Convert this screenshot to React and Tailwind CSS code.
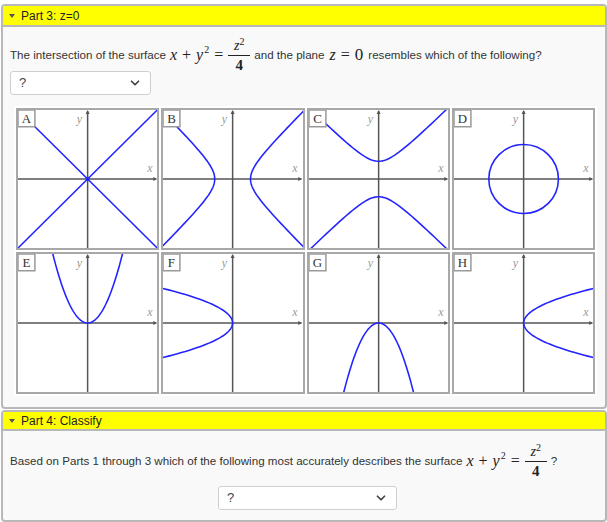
import { ChevronDown } from 'lucide-react'

const BLUE = '#2424ff'
const SERIF = { fontFamily: "'Liberation Serif', 'DejaVu Serif', serif" }

function curve(fn, from, to, steps = 60) {
  const pts = []
  for (let i = 0; i <= steps; i++) {
    const t = from + ((to - from) * i) / steps
    const [x, y] = fn(t)
    pts.push(`${i === 0 ? 'M' : 'L'}${x.toFixed(2)} ${y.toFixed(2)}`)
  }
  return pts.join(' ')
}

const C = 70
const A = 18
const K = 17.5

const PLOTS = {
  A: [`M0 140 L140 0`, `M16 16 L140 140`],
  B: [
    curve((t) => [C - A * Math.cosh(t), C - A * Math.sinh(t)], -2.06, 2.06),
    curve((t) => [C + A * Math.cosh(t), C - A * Math.sinh(t)], -2.06, 2.06),
  ],
  C: [
    curve((t) => [C + A * Math.sinh(t), C - A * Math.cosh(t)], -2.06, 2.06),
    curve((t) => [C + A * Math.sinh(t), C + A * Math.cosh(t)], -2.06, 2.06),
  ],
  D: [],
  E: [curve((t) => [C + t, C - (t * t) / K], -36, 36)],
  F: [curve((t) => [C - (t * t) / K, C + t], -36, 36)],
  G: [curve((t) => [C + t, C + (t * t) / K], -36, 36)],
  H: [curve((t) => [C + (t * t) / K, C + t], -36, 36)],
}

function Plot({ id }) {
  return (
    <div className="h-[142px] border-2 border-[#a8a8a8] bg-white">
      <svg viewBox="0 0 140 140" className="w-full h-full block" preserveAspectRatio="none">
        <line x1="70" y1="140" x2="70" y2="1" stroke="#555" strokeWidth="1.5" />
        <line x1="0" y1="70" x2="139" y2="70" stroke="#555" strokeWidth="1.5" />
        <path d="M70 0 L68 4 L72 4 Z" fill="#555" />
        <path d="M140 70 L136 68 L136 72 Z" fill="#555" />
        <text x="59" y="13" fontSize="12" fontStyle="italic" fill="#999" fontFamily="'Liberation Serif', serif">
          y
        </text>
        <text x="130" y="63" fontSize="12" fontStyle="italic" fill="#999" fontFamily="'Liberation Serif', serif">
          x
        </text>
        {PLOTS[id].map((d, i) => (
          <path key={i} d={d} fill="none" stroke={BLUE} strokeWidth="1.6" />
        ))}
        {id === 'D' && <circle cx="70" cy="70" r="35" fill="none" stroke={BLUE} strokeWidth="1.6" />}
        {id === 'A' && <circle cx="70" cy="70" r="2" fill={BLUE} />}
        <rect x="0" y="0" width="17" height="17" fill="white" stroke="#999" strokeWidth="1.5" />
        <text x="8.5" y="13.5" fontSize="13" textAnchor="middle" fill="#333" fontFamily="'Liberation Serif', serif">
          {id}
        </text>
      </svg>
    </div>
  )
}

function Surface() {
  return (
    <span className="inline-flex items-center mx-[4px] text-[16px] text-[#222]" style={SERIF}>
      <span className="italic">x</span>
      <span className="mx-[5px]">+</span>
      <span className="italic">y</span>
      <sup className="text-[10px] ml-[1px]">2</sup>
      <span className="mx-[5px]">=</span>
      <span className="inline-flex flex-col items-center leading-none">
        <span className="px-[2px] pb-[2px]">
          <span className="italic text-[14px]">z</span>
          <sup className="text-[10px]">2</sup>
        </span>
        <span className="w-[22px] border-t border-[#222]" />
        <span className="pt-[2px] text-[15px] font-bold">4</span>
      </span>
    </span>
  )
}

function Select({ className = '' }) {
  return (
    <div className={`h-[24px] bg-white border border-[#cfcfcf] rounded-[3px] flex items-center justify-between pl-[8px] pr-[8px] ${className}`}>
      <span className="text-[13px] text-[#444]">?</span>
      <ChevronDown size={14} strokeWidth={3} className="text-[#444]" />
    </div>
  )
}

function Header({ title, h }) {
  return (
    <div className={`${h} bg-[#ffff00] border-b-2 border-[#b8b8b8] flex items-center pl-[6px] gap-[6px]`}>
      <svg width="6" height="4" viewBox="0 0 6 4">
        <path d="M0 0 L6 0 L3 4 Z" fill="#555" />
      </svg>
      <span className="text-[12px] text-[#222]">{title}</span>
    </div>
  )
}

export default function App() {
  return (
    <div
      className="w-[607px] h-[522px] bg-white overflow-hidden pt-[4px] text-[#333]"
      style={{ fontFamily: "'Liberation Sans', Arial, sans-serif" }}
    >
      <section className="ml-[1px] w-[606px] border-2 border-[#b8b8b8] rounded-[4px] bg-[#f9f9f9] overflow-hidden">
        <Header title="Part 3: z=0" h="h-[21px]" />
        <div className="pt-[12px] pb-[11px] pl-[7px]">
          <div className="h-[31px] flex items-center text-[11.6px]">
            <span>The intersection of the surface</span>
            <Surface />
            <span>and the plane</span>
            <span className="mx-[5px] text-[16px] text-[#222]" style={SERIF}>
              <span className="italic">z</span>
              <span className="mx-[5px]">=</span>
              <span className="text-[17px]">0</span>
            </span>
            <span>resembles which of the following?</span>
          </div>
          <Select className="w-[141px] mt-[1px]" />
          <div className="mt-[11px] ml-[4px] w-[583px] bg-white p-[2px] grid grid-cols-4 gap-[2px]">
            {['A', 'B', 'C', 'D', 'E', 'F', 'G', 'H'].map((id) => (
              <Plot key={id} id={id} />
            ))}
          </div>
        </div>
      </section>
      <section className="mt-[1px] ml-[1px] w-[606px] border-2 border-[#b8b8b8] rounded-[4px] bg-[#f9f9f9] overflow-hidden">
        <Header title="Part 4: Classify" h="h-[19px]" />
        <div className="pt-[14px] pb-[10px] pl-[7px]">
          <div className="h-[32px] flex items-center text-[11.6px]">
            <span>Based on Parts 1 through 3 which of the following most accurately describes the surface</span>
            <Surface />
            <span>?</span>
          </div>
          <Select className="w-[179px] mt-[9px] ml-[208px] h-[23px]" />
        </div>
      </section>
    </div>
  )
}
